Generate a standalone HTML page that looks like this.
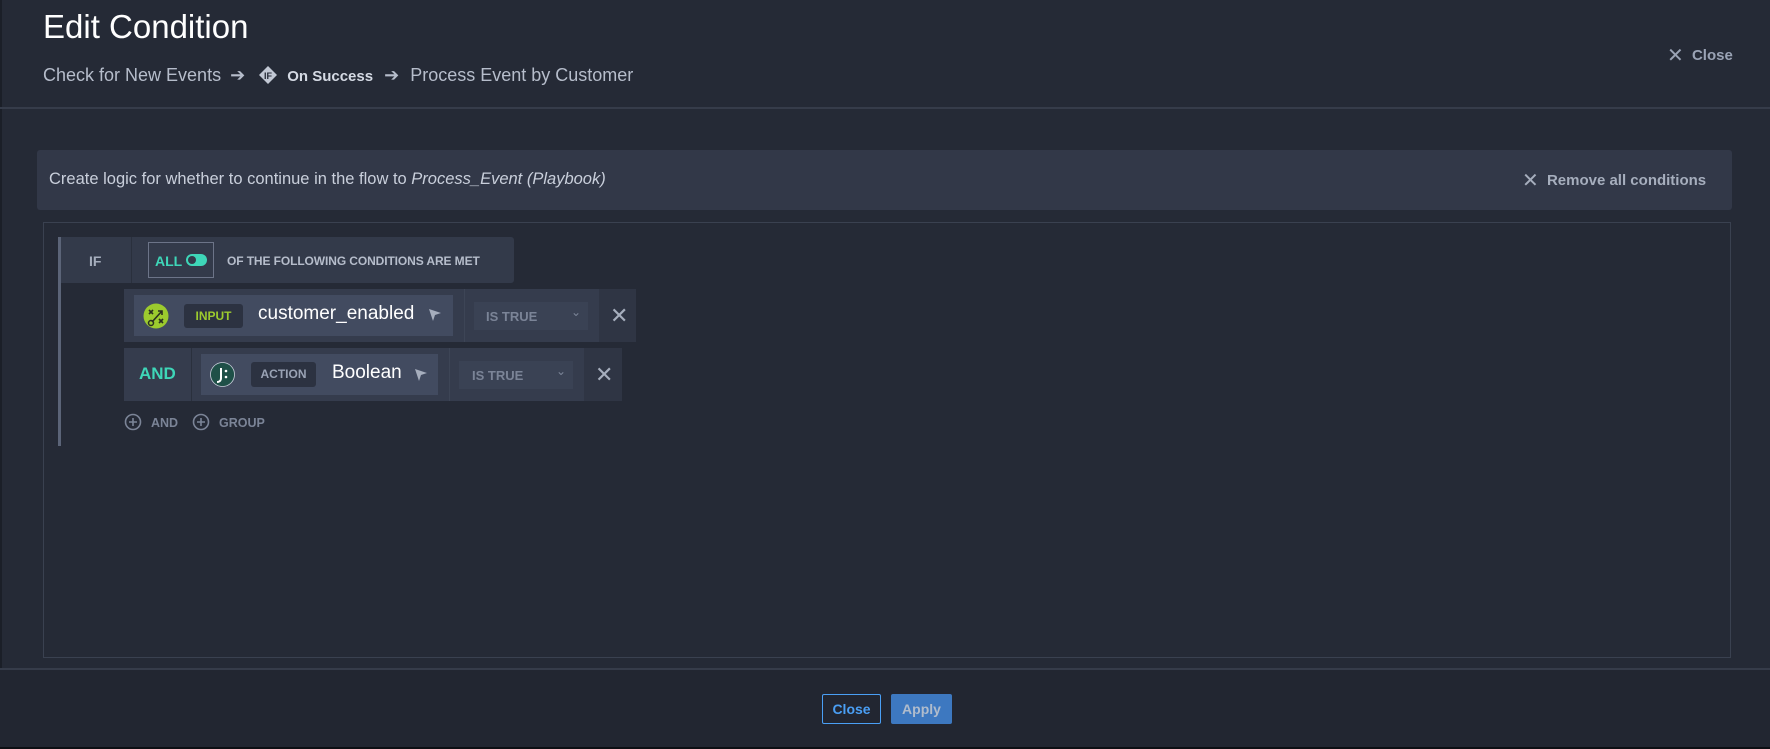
<!DOCTYPE html>
<html><head><meta charset="utf-8"><style>
*{box-sizing:border-box;margin:0;padding:0}
body{width:1770px;height:749px;background:#252a36;font-family:"Liberation Sans",sans-serif;position:relative;overflow:hidden;color:#c9cfdb}
.a{position:absolute}
.b{font-weight:bold}
</style></head><body>
<div class="a" style="left:0;top:0;width:2px;height:749px;background:#1b1f28"></div>
<div class="a" style="left:43px;top:8px;font-size:33px;color:#fff">Edit Condition</div>
<div class="a" style="left:43px;top:65px;font-size:18px;color:#b6bdcb;white-space:nowrap">Check for New Events <span style="margin:0 8px 0 4px">➔</span>
<svg width="20" height="20" viewBox="0 0 20 20" style="vertical-align:-4px"><path d="M10 1 L19 10 L10 19 L1 10Z" fill="#c2c8d4"/><text x="10" y="14" font-size="9" font-weight="bold" text-anchor="middle" fill="#252a36" font-family="Liberation Sans">IF</text></svg>
<span class="b" style="font-size:15px;color:#d5dae4;margin-left:4px">On Success</span> <span style="margin:0 6px">➔</span> Process Event by Customer</div>
<div class="a" style="left:1667px;top:43px;font-size:15px;color:#9aa3b5" ><span style="font-size:20px;font-weight:normal;vertical-align:-2px">✕</span> <span class="b" style="margin-left:4px">Close</span></div>
<div class="a" style="left:0;top:107px;width:1770px;height:2px;background:#363c4a"></div>

<div class="a" style="left:37px;top:150px;width:1695px;height:60px;background:#323848;border-radius:3px"></div>
<div class="a" style="left:49px;top:170px;font-size:16.5px;color:#c9cfdb">Create logic for whether to continue in the flow to <i>Process_Event (Playbook)</i></div>
<div class="a" style="left:1522px;top:168px;font-size:15px;color:#a6aebd"><span style="font-size:20px;vertical-align:-2px">✕</span> <span class="b" style="margin-left:4px">Remove all conditions</span></div>

<div class="a" style="left:43px;top:222px;width:1688px;height:436px;border:1px solid #3a4150;background:#252a36"></div>
<div class="a" style="left:58px;top:237px;width:3px;height:209px;background:#5b6478"></div>
<div class="a" style="left:61px;top:237px;width:453px;height:46px;background:#333a4a;border-radius:0 3px 3px 0"></div>
<div class="a" style="left:131px;top:237px;width:1px;height:46px;background:#2a303d"></div>
<div class="a b" style="left:89px;top:253px;font-size:14px;color:#a6aebd">IF</div>
<div class="a" style="left:148px;top:242px;width:66px;height:36px;border:1px solid #6c7488"></div>
<div class="a b" style="left:155px;top:253px;font-size:14px;color:#3ed6b8">ALL</div>
<div class="a" style="left:186px;top:254px;width:21px;height:12px;border-radius:6px;background:#3ed6b8"></div>
<div class="a" style="left:188px;top:256px;width:8px;height:8px;border-radius:50%;background:#333a4a"></div>
<div class="a b" style="left:227px;top:254px;font-size:12px;color:#b6bdcb;letter-spacing:-0.1px">OF THE FOLLOWING CONDITIONS ARE MET</div>

<!-- row1 -->
<div class="a" style="left:124px;top:289px;width:512px;height:53px;background:#353c4d"></div>
<div class="a" style="left:134px;top:295px;width:319px;height:41px;background:#424b60"></div>
<svg class="a" style="left:143px;top:303px" width="26" height="26" viewBox="0 0 26 26"><circle cx="13" cy="13" r="12.5" fill="#9ccb2e"/><path d="M6 7l4 4M10 7l-4 4M16 16l4 4M20 16l-4 4M9 19l10-11M15 8h4v4" stroke="#2a3020" stroke-width="1.6" fill="none"/><circle cx="8" cy="20" r="2.5" stroke="#2a3020" stroke-width="1.5" fill="none"/></svg>
<div class="a b" style="left:184px;top:304px;width:59px;height:24px;background:#2c3241;border-radius:3px;color:#9ccb2e;font-size:12px;text-align:center;line-height:24px">INPUT</div>
<div class="a" style="left:258px;top:303px;font-size:19px;color:#fff">customer_enabled</div>
<svg class="a" style="left:427px;top:306px" width="16" height="16" viewBox="0 0 16 16"><path d="M2 3 L14 7 L8 9 L6 15Z" fill="#a6aebd"/></svg>
<div class="a" style="left:464px;top:289px;width:1px;height:53px;background:#3d4556"></div>
<div class="a" style="left:474px;top:302px;width:114px;height:28px;background:#3a4254"></div>
<div class="a b" style="left:486px;top:309px;font-size:13px;color:#7b8497">IS TRUE</div>
<div class="a" style="left:571px;top:305px;font-size:12px;color:#7b8497">⌄</div>
<div class="a" style="left:599px;top:289px;width:37px;height:53px;background:#2f3544"></div>
<div class="a" style="left:610px;top:303px;font-size:22px;color:#a6aebd">✕</div>

<!-- row2 -->
<div class="a" style="left:124px;top:348px;width:498px;height:53px;background:#353c4d"></div>
<div class="a b" style="left:139px;top:364px;font-size:17px;color:#3ed6b8">AND</div>
<div class="a" style="left:191px;top:348px;width:1px;height:53px;background:#2a303d"></div>
<div class="a" style="left:201px;top:354px;width:237px;height:41px;background:#424b60"></div>
<svg class="a" style="left:210px;top:362px" width="25" height="25" viewBox="0 0 25 25"><circle cx="12.5" cy="12.5" r="12" fill="#1f5048" stroke="#c9cfdb" stroke-width="0.8"/><path d="M11 6v10c0 3-2 4-4 4" stroke="#fff" stroke-width="2" fill="none"/><circle cx="16" cy="9" r="1.3" fill="#fff"/><circle cx="16" cy="15" r="1.3" fill="#fff"/></svg>
<div class="a b" style="left:251px;top:362px;width:65px;height:25px;background:#2c3241;border-radius:3px;color:#9aa3b5;font-size:12px;text-align:center;line-height:25px">ACTION</div>
<div class="a" style="left:332px;top:362px;font-size:19px;color:#fff">Boolean</div>
<svg class="a" style="left:413px;top:366px" width="16" height="16" viewBox="0 0 16 16"><path d="M2 3 L14 7 L8 9 L6 15Z" fill="#a6aebd"/></svg>
<div class="a" style="left:449px;top:348px;width:1px;height:53px;background:#3d4556"></div>
<div class="a" style="left:459px;top:361px;width:114px;height:28px;background:#3a4254"></div>
<div class="a b" style="left:472px;top:368px;font-size:13px;color:#7b8497">IS TRUE</div>
<div class="a" style="left:556px;top:364px;font-size:12px;color:#7b8497">⌄</div>
<div class="a" style="left:584px;top:348px;width:38px;height:53px;background:#2f3544"></div>
<div class="a" style="left:595px;top:362px;font-size:22px;color:#a6aebd">✕</div>

<!-- add -->
<svg class="a" style="left:124px;top:413px" width="18" height="18" viewBox="0 0 18 18"><circle cx="9" cy="9" r="7.5" stroke="#7b8497" stroke-width="1.6" fill="none"/><path d="M9 5v8M5 9h8" stroke="#7b8497" stroke-width="1.6"/></svg>
<div class="a b" style="left:151px;top:416px;font-size:12.5px;color:#7b8497">AND</div>
<svg class="a" style="left:192px;top:413px" width="18" height="18" viewBox="0 0 18 18"><circle cx="9" cy="9" r="7.5" stroke="#7b8497" stroke-width="1.6" fill="none"/><path d="M9 5v8M5 9h8" stroke="#7b8497" stroke-width="1.6"/></svg>
<div class="a b" style="left:219px;top:416px;font-size:12.5px;color:#7b8497">GROUP</div>

<div class="a" style="left:0;top:668px;width:1770px;height:2px;background:#363c4a"></div>
<div class="a" style="left:0;top:670px;width:1770px;height:77px;background:#222631"></div>
<div class="a b" style="left:822px;top:694px;width:59px;height:30px;border:1px solid #4a9ff5;border-radius:2px;color:#4a9ff5;font-size:14px;text-align:center;line-height:28px">Close</div>
<div class="a b" style="left:891px;top:694px;width:61px;height:30px;background:#3d78c0;border-radius:2px;color:#b0bccc;font-size:14px;text-align:center;line-height:30px">Apply</div>
<div class="a" style="left:0;top:747px;width:1770px;height:2px;background:#0d0f14"></div>
</body></html>
